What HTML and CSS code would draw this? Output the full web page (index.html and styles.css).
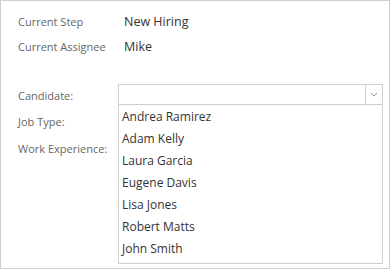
FILE: index.html
```html
<!DOCTYPE html>
<html>
<head>
<meta charset="utf-8">
<link rel="stylesheet" href="styles.css">
</head>
<body>
<div class="frame">
  <div class="info">
    <div class="info-row"><span class="info-label">Current Step</span><span class="info-value">New Hiring</span></div>
    <div class="info-row"><span class="info-label">Current Assignee</span><span class="info-value">Mike</span></div>
  </div>
  <div class="form">
    <div class="form-row">
      <span class="form-label">Candidate:</span>
      <div class="combo">
        <div class="combo-input">
          <div class="combo-text"></div>
          <div class="combo-btn">
            <svg width="8" height="5" viewBox="0 0 8 5"><path d="M1 1 L4 4 L7 1" fill="none" stroke="#999" stroke-width="1"/></svg>
          </div>
        </div>
        <ul class="combo-list">
          <li>Andrea Ramirez</li>
          <li>Adam Kelly</li>
          <li>Laura Garcia</li>
          <li>Eugene Davis</li>
          <li>Lisa Jones</li>
          <li>Robert Matts</li>
          <li>John Smith</li>
        </ul>
      </div>
    </div>
    <div class="form-row"><span class="form-label">Job Type:</span></div>
    <div class="form-row"><span class="form-label">Work Experience:</span></div>
  </div>
</div>
</body>
</html>
```
FILE: styles.css
```css
html, body { margin: 0; padding: 0; background: #fff; }
body { font-family: "Open Sans", "Noto Sans", sans-serif; }
.frame {
  box-sizing: border-box;
  width: 390px;
  height: 269px;
  border: 1px solid #cfcfcf;
  padding: 8px 0 0 17px;
}
.info { display: flex; flex-direction: column; }
.info-row { display: flex; align-items: center; height: 25px; }
.info-label { width: 106px; font-size: 11px; color: #666; }
.info-value { font-size: 12.5px; color: #333; }
.form { margin-top: 23px; display: flex; flex-direction: column; }
.form-row { display: flex; align-items: center; height: 26.5px; position: relative; }
.form-label { width: 100px; font-size: 11px; color: #666; }
.combo { position: absolute; left: 100px; top: 2px; width: 265px; z-index: 2; }
.combo-input {
  box-sizing: border-box;
  display: flex;
  height: 21px;
  border: 1px solid #cfcfcf;
  background: #fff;
}
.combo-text { flex: 1; }
.combo-btn {
  width: 16px;
  border-left: 1px solid #cfcfcf;
  display: flex; align-items: center; justify-content: center;
}
.combo-list {
  list-style: none;
  margin: 0;
  padding: 1px 0 3px;
  border: 1px solid #cfcfcf;
  border-top: 0;
  background: #fff;
}
.combo-list li {
  height: 22px;
  line-height: 22px;
  padding-left: 3px;
  font-size: 12px;
  color: #333;
}
```
